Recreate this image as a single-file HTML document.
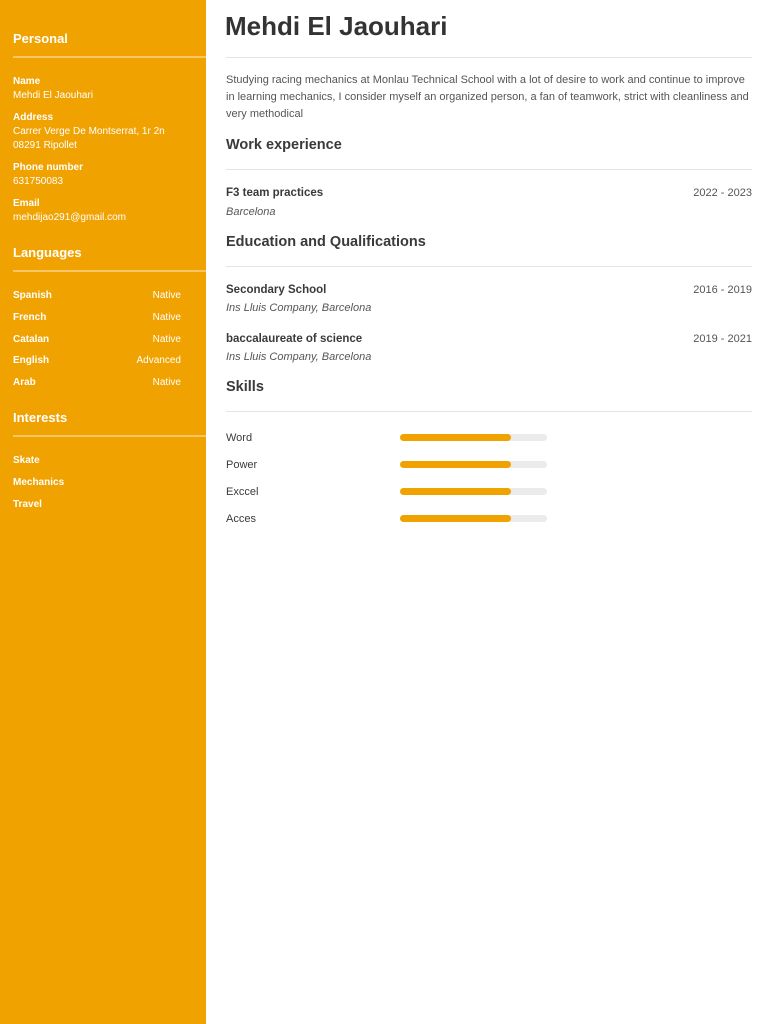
<!DOCTYPE html>
<html><head><meta charset="utf-8"><style>
*{margin:0;padding:0;box-sizing:border-box}
body{width:768px;height:1024px;background:#fff;font-family:"Liberation Sans",sans-serif;position:relative;overflow:hidden}
#side{position:absolute;left:0;top:0;width:206px;height:1024px;background:#f0a200;color:#fff}
.a{position:absolute;white-space:nowrap;line-height:14px;transform:translateY(-6px)}
.sh{font-size:13px;font-weight:bold;left:13px}
.sl{position:absolute;left:13px;width:193px;height:2px;background:#f7c767}
.lb{font-size:10px;font-weight:bold;left:13px}
.v{font-size:10px;left:13px}
.r{font-size:10px;right:25px}
.h{font-size:14.5px;font-weight:bold;left:226px;color:#3a3a3a;line-height:18px}
.ml{position:absolute;left:226px;width:526px;height:1px;background:#e4e4e4}
.t{font-size:11.5px;font-weight:bold;left:226px;color:#3a3a3a}
.s{font-size:11px;left:226px;color:#3a3a3a}
.i{font-size:11px;font-style:italic;left:226px;color:#555}
.d{font-size:11px;right:16px;color:#555}
.bar{position:absolute;left:400px;width:147px;height:7px;border-radius:4px;background:#ebebeb}
.bar div{width:111px;height:7px;border-radius:4px;background:#f0a200}
.p{font-size:11px;left:226px;color:#555}
</style></head><body>
<div id="side">
<div class="a sh" style="top:38px">Personal</div>
<div class="sl" style="top:56px"></div>
<div class="a lb" style="top:81px">Name</div>
<div class="a v" style="top:95px">Mehdi El Jaouhari</div>
<div class="a lb" style="top:117px">Address</div>
<div class="a v" style="top:131px">Carrer Verge De Montserrat, 1r 2n</div>
<div class="a v" style="top:145px">08291 Ripollet</div>
<div class="a lb" style="top:167px">Phone number</div>
<div class="a v" style="top:181px">631750083</div>
<div class="a lb" style="top:203px">Email</div>
<div class="a v" style="top:217px">mehdijao291@gmail.com</div>
<div class="a sh" style="top:252px">Languages</div>
<div class="sl" style="top:270px"></div>
<div class="a lb" style="top:295px">Spanish</div><div class="a r" style="top:295px">Native</div>
<div class="a lb" style="top:317px">French</div><div class="a r" style="top:317px">Native</div>
<div class="a lb" style="top:339px">Catalan</div><div class="a r" style="top:339px">Native</div>
<div class="a lb" style="top:360px">English</div><div class="a r" style="top:360px">Advanced</div>
<div class="a lb" style="top:382px">Arab</div><div class="a r" style="top:382px">Native</div>
<div class="a sh" style="top:417px">Interests</div>
<div class="sl" style="top:435px"></div>
<div class="a lb" style="top:460px">Skate</div>
<div class="a lb" style="top:482px">Mechanics</div>
<div class="a lb" style="top:504px">Travel</div>
</div>
<div class="a" style="top:26px;left:225px;font-size:26px;font-weight:bold;line-height:30px;transform:translateY(-15px);color:#333">Mehdi El Jaouhari</div>
<div class="ml" style="top:57px"></div>
<div class="a p" style="top:79px">Studying racing mechanics at Monlau Technical School with a lot of desire to work and continue to improve</div>
<div class="a p" style="top:96px">in learning mechanics, I consider myself an organized person, a fan of teamwork, strict with cleanliness and</div>
<div class="a p" style="top:113px">very methodical</div>
<div class="a h" style="top:145px;transform:translateY(-9px)">Work experience</div>
<div class="ml" style="top:169px"></div>
<div class="a t" style="top:192px">F3 team practices</div><div class="a d" style="top:192px">2022 - 2023</div>
<div class="a i" style="top:211px">Barcelona</div>
<div class="a h" style="top:242px;transform:translateY(-9px)">Education and Qualifications</div>
<div class="ml" style="top:266px"></div>
<div class="a t" style="top:289px">Secondary School</div><div class="a d" style="top:289px">2016 - 2019</div>
<div class="a i" style="top:307px">Ins Lluis Company, Barcelona</div>
<div class="a t" style="top:338px">baccalaureate of science</div><div class="a d" style="top:338px">2019 - 2021</div>
<div class="a i" style="top:356px">Ins Lluis Company, Barcelona</div>
<div class="a h" style="top:387px;transform:translateY(-9px)">Skills</div>
<div class="ml" style="top:411px"></div>
<div class="a s" style="top:437px">Word</div><div class="bar" style="top:434px"><div></div></div>
<div class="a s" style="top:464px">Power</div><div class="bar" style="top:461px"><div></div></div>
<div class="a s" style="top:491px">Exccel</div><div class="bar" style="top:488px"><div></div></div>
<div class="a s" style="top:518px">Acces</div><div class="bar" style="top:515px"><div></div></div>
</body></html>
